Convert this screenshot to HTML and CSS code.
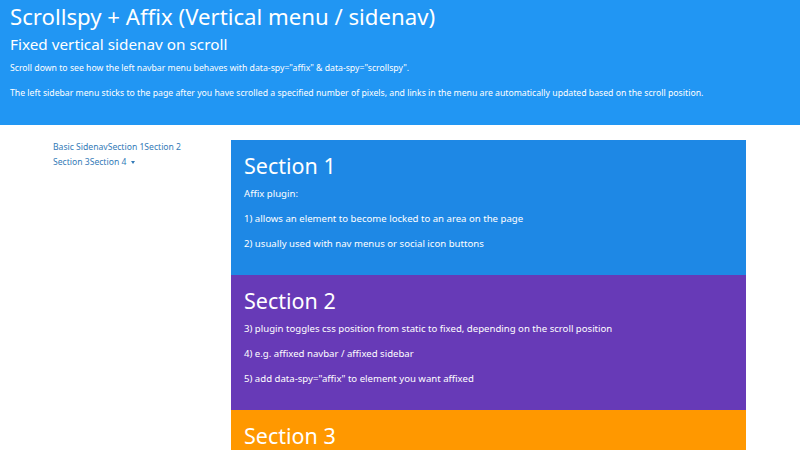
FILE: index.html
```html
<!DOCTYPE html>
<html>
<head>
<meta charset="utf-8">
<link rel="stylesheet" href="styles.css">
</head>
<body>
<header class="hero">
  <h1 class="title">Scrollspy + Affix (Vertical menu / sidenav)</h1>
  <h2 class="subtitle">Fixed vertical sidenav on scroll</h2>
  <p class="lead first">Scroll down to see how the left navbar menu behaves with data-spy="affix" &amp; data-spy="scrollspy".</p>
  <p class="lead">The left sidebar menu sticks to the page after you have scrolled a specified number of pixels, and links in the menu are automatically updated based on the scroll position.</p>
</header>
<main class="layout">
  <nav class="sidenav">
    <a class="navlink" href="#">Basic Sidenav</a>
    <a class="navlink" href="#">Section 1</a>
    <a class="navlink" href="#">Section 2</a>
    <a class="navlink" href="#">Section 3</a>
    <a class="navlink" href="#">Section 4<span class="caret"></span></a>
  </nav>
  <div class="sections">
    <section class="sec sec1">
      <h3 class="sec-title">Section 1</h3>
      <p>Affix plugin:</p>
      <p>1) allows an element to become locked to an area on the page</p>
      <p>2) usually used with nav menus or social icon buttons</p>
    </section>
    <section class="sec sec2">
      <h3 class="sec-title">Section 2</h3>
      <p>3) plugin toggles css position from static to fixed, depending on the scroll position</p>
      <p>4) e.g. affixed navbar / affixed sidebar</p>
      <p>5) add data-spy="affix" to element you want affixed</p>
    </section>
    <section class="sec sec3">
      <h3 class="sec-title">Section 3</h3>
    </section>
  </div>
</main>
</body>
</html>
```
FILE: styles.css
```css
html, body {
  margin: 0;
  padding: 0;
  background: #fff;
  font-family: "Noto Sans", "Open Sans", sans-serif;
  overflow: hidden;
}
.hero {
  background: #2196f3;
  color: #fff;
  padding: 0 10px;
  height: 125px;
  box-sizing: border-box;
  overflow: hidden;
}
.title {
  margin: 0;
  font-size: 22.2px;
  font-weight: 400;
  line-height: 34px;
}
.subtitle {
  margin: 0;
  font-size: 15.3px;
  font-weight: 400;
  line-height: 20px;
}
.lead {
  margin: 11px 0 0;
  font-size: 8.7px;
  line-height: 14px;
}
.lead.first {
  margin-top: 7px;
}
.layout {
  display: flex;
  padding-top: 15px;
}
.sidenav {
  width: 231px;
  padding: 0 28px 0 53px;
  box-sizing: border-box;
  display: flex;
  flex-wrap: wrap;
  align-content: flex-start;
  font-size: 8.6px;
  line-height: 15px;
}
.navlink {
  color: #337ab7;
  text-decoration: none;
  white-space: nowrap;
}
.caret {
  display: inline-block;
  width: 0;
  height: 0;
  margin-left: 5px;
  vertical-align: middle;
  border-top: 3px solid #337ab7;
  border-left: 2.5px solid transparent;
  border-right: 2.5px solid transparent;
}
.sections {
  width: 515px;
}
.sec {
  color: #fff;
  padding: 10px 13px;
  height: 135px;
  box-sizing: border-box;
}
.sec1 { background: #1e88e5; }
.sec2 { background: #673ab7; }
.sec3 { background: #ff9800; }
.sec-title {
  margin: 0 0 5px;
  font-size: 21.5px;
  font-weight: 400;
  line-height: 32px;
}
.sec p {
  margin: 0 0 11px;
  font-size: 9.6px;
  line-height: 14px;
}
```
